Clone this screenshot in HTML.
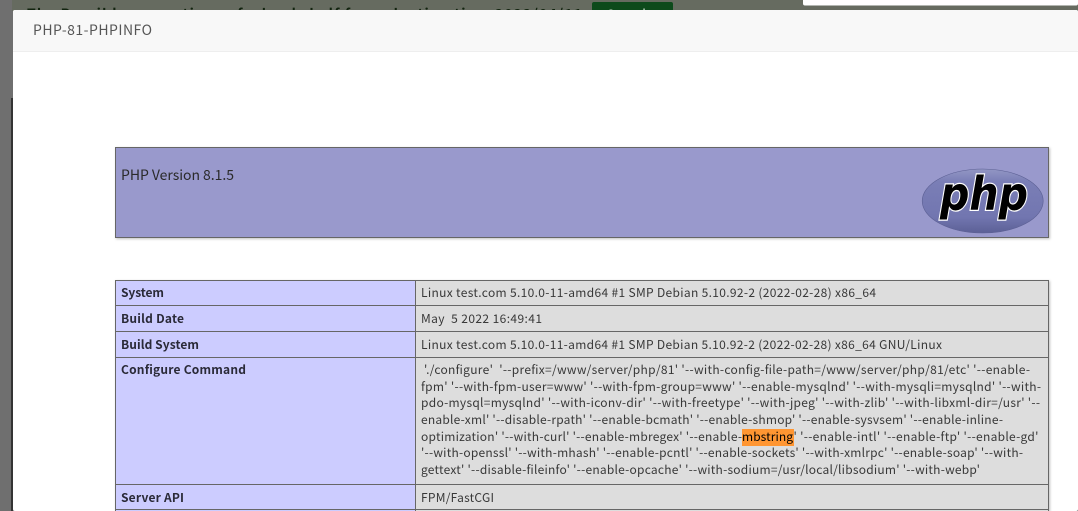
<!DOCTYPE html>
<html>
<head>
<meta charset="utf-8">
<style>
html,body{margin:0;padding:0;width:1078px;height:511px;overflow:hidden;background:#fff}
svg{display:block;position:absolute;left:0;top:0}
text{font-family:"Noto Sans CJK SC","Liberation Sans",sans-serif;font-size:12px;fill:#383838;white-space:pre}
.b{font-weight:700;fill:#2a2a38}
</style>
</head>
<body>
<svg width="1078" height="511" viewBox="0 0 1078 511" xmlns="http://www.w3.org/2000/svg">
<defs>
<linearGradient id="g" x1="0" y1="0" x2="0" y2="1"><stop offset="0" stop-color="#9296c4"/><stop offset=".2" stop-color="#7a7eb6"/><stop offset=".75" stop-color="#7276b0"/><stop offset="1" stop-color="#5c6096"/></linearGradient>
<filter id="s" x="-2%" y="-5%" width="104%" height="110%"><feDropShadow dx="1" dy="1" stdDeviation="1.2" flood-color="#000" flood-opacity=".25"/></filter>
</defs>
<rect x="0" y="0" width="1078" height="511" fill="#6f6f6f"/>
<rect x="12" y="0" width="1066" height="11" fill="#666b60"/>
<rect x="11" y="98" width="2" height="413" fill="#333"/>
<text x="27" y="19" style="font-size:14px;font-weight:700;fill:#12240f" textLength="555">The Possible promotions of a bookshelf for reduction time 2022/04/11</text>
<rect x="592" y="2" width="81" height="20" rx="2" fill="#0d4a1b"/>
<text x="606" y="19" style="font-size:13px;fill:#d8e4d8">Complete</text>
<rect x="803" y="-4" width="275" height="9.5" rx="2" fill="#fff"/>
<rect x="13" y="10" width="1065" height="501" rx="2" fill="#fff"/>
<rect x="13" y="10" width="1065" height="41" rx="2" fill="#f8f8f8"/>
<rect x="13" y="51" width="1065" height="1" fill="#eeeeee"/>
<text x="33" y="35" style="font-size:14px;fill:#555" textLength="119">PHP-81-PHPINFO</text>

<rect x="115.5" y="147.5" width="933" height="90" fill="#9999cc" stroke="#666" filter="url(#s)"/>
<text x="121" y="180" style="font-size:14px;fill:#2a2a2a" textLength="113">PHP Version 8.1.5</text>
<ellipse cx="982.7" cy="201" rx="60.5" ry="32" fill="url(#g)" stroke="#5b5f93" stroke-width=".6"/>
<text x="940" y="210" textLength="88" lengthAdjust="spacingAndGlyphs" style="font-family:'DejaVu Sans',sans-serif;font-size:46px;font-style:italic;font-weight:700;fill:#000;stroke:#fff;stroke-width:2.4px;paint-order:stroke">php</text>

<rect x="115" y="280" width="934" height="231" fill="#666" filter="url(#s)"/>
<g fill="#ccccff">
<rect x="116" y="281" width="299" height="24"/>
<rect x="116" y="306" width="299" height="25"/>
<rect x="116" y="332" width="299" height="25"/>
<rect x="116" y="358" width="299" height="126"/>
<rect x="116" y="485" width="299" height="24"/>
<rect x="116" y="510" width="299" height="1"/>
</g>
<g fill="#dddddd">
<rect x="416" y="281" width="632" height="24"/>
<rect x="416" y="306" width="632" height="25"/>
<rect x="416" y="332" width="632" height="25"/>
<rect x="416" y="358" width="632" height="126"/>
<rect x="416" y="485" width="632" height="24"/>
<rect x="416" y="510" width="632" height="1"/>
</g>

<text class="b" x="121" y="297" textLength="43">System</text>
<text class="b" x="121" y="323" textLength="63">Build Date</text>
<text class="b" x="121" y="349" textLength="78">Build System</text>
<text class="b" x="121" y="374" textLength="125">Configure Command</text>
<text class="b" x="121" y="502" textLength="63">Server API</text>

<text x="421" y="297" textLength="455">Linux test.com 5.10.0-11-amd64 #1 SMP Debian 5.10.92-2 (2022-02-28) x86_64</text>
<text x="421" y="323" textLength="121">May  5 2022 16:49:41</text>
<text x="421" y="349" textLength="521">Linux test.com 5.10.0-11-amd64 #1 SMP Debian 5.10.92-2 (2022-02-28) x86_64 GNU/Linux</text>

<text x="424" y="374" textLength="606">'./configure'  '--prefix=/www/server/php/81' '--with-config-file-path=/www/server/php/81/etc' '--enable-</text>
<text x="421" y="391" textLength="620">fpm' '--with-fpm-user=www' '--with-fpm-group=www' '--enable-mysqlnd' '--with-mysqli=mysqlnd' '--with-</text>
<text x="421" y="407" textLength="619">pdo-mysql=mysqlnd' '--with-iconv-dir' '--with-freetype' '--with-jpeg' '--with-zlib' '--with-libxml-dir=/usr' '--</text>
<text x="421" y="424" textLength="582">enable-xml' '--disable-rpath' '--enable-bcmath' '--enable-shmop' '--enable-sysvsem' '--enable-inline-</text>
<rect x="742" y="429" width="52" height="17" fill="#ff9632"/>
<text x="421" y="441" textLength="321">optimization' '--with-curl' '--enable-mbregex' '--enable-</text>
<text x="742" y="441" textLength="51" style="fill:#000">mbstring</text>
<text x="793.5" y="441" textLength="245">' '--enable-intl' '--enable-ftp' '--enable-gd'</text>
<text x="421" y="457" textLength="602">'--with-openssl' '--with-mhash' '--enable-pcntl' '--enable-sockets' '--with-xmlrpc' '--enable-soap' '--with-</text>
<text x="421" y="474" textLength="559">gettext' '--disable-fileinfo' '--enable-opcache' '--with-sodium=/usr/local/libsodium' '--with-webp'</text>

<text x="421" y="502" textLength="73">FPM/FastCGI</text>
</svg>
</body>
</html>
